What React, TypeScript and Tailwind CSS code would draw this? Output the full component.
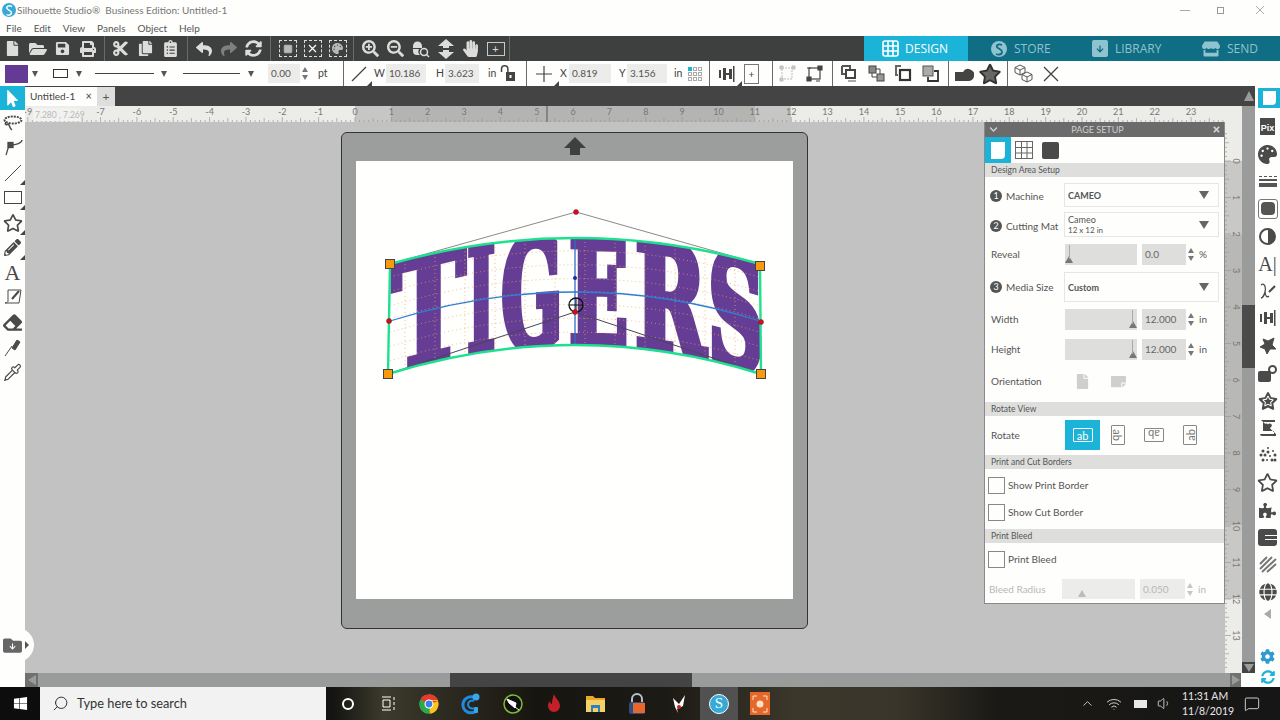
import { ReactNode } from "react";
import {
  FaFile, FaFolderOpen, FaSave, FaPrint, FaCut, FaCopy, FaClipboardList, FaReply, FaShare, FaSyncAlt,
  FaSearchPlus, FaSearchMinus, FaHandPaper, FaPalette, FaStar, FaRegStar, FaPuzzlePiece, FaGlobe, FaCog,
  FaPencilAlt, FaEraser, FaWindows, FaChevronDown, FaTimes, FaMousePointer, FaFolder, FaArrowDown, FaStore,
} from "react-icons/fa";
import { Pipette, Square, Wifi, Volume1, MessageSquare, ChevronUp, Search } from "lucide-react";

const PX = 36.35;

function Cell({ children }: { children: ReactNode }) {
  return <div className="w-[25px] h-full flex items-center justify-center text-[#dcdcda] shrink-0">{children}</div>;
}

function Group({ className, children }: { className: string; children: ReactNode }) {
  return <div className={`relative flex h-full items-center shrink-0 border-r border-[#6a6a6a] ${className}`}>{children}</div>;
}

function DashedBox({ children }: { children: ReactNode }) {
  return (
    <div className="w-[18px] h-[17px] border border-dashed border-[#dddddd] flex items-center justify-center text-[#b8b8b8]">
      {children}
    </div>
  );
}

function TopBar() {
  return (
    <div className="h-[25px] bg-[#3e403f] flex items-center shrink-0">
      <Group className="w-[105px]">
        <Cell><FaFile size={15} /></Cell>
        <Cell><FaFolderOpen size={18} /></Cell>
        <Cell><FaSave size={15} /></Cell>
        <Cell><FaPrint size={16} /></Cell>
      </Group>
      <Group className="w-[83px] pl-[3px]">
        <Cell><FaCut size={17} /></Cell>
        <Cell><FaCopy size={15} /></Cell>
        <Cell><FaClipboardList size={17} /></Cell>
      </Group>
      <Group className="w-[83px] pl-[3px]">
        <Cell><FaReply size={16} /></Cell>
        <Cell><FaShare size={16} className="text-[#7f7f7f]" /></Cell>
        <Cell><FaSyncAlt size={17} /></Cell>
      </Group>
      <Group className="w-[83px] pl-[4px]">
        <Cell><DashedBox><Square size={10} fill="currentColor" /></DashedBox></Cell>
        <Cell>
          <DashedBox>
            <svg width="9" height="9" viewBox="0 0 9 9" stroke="white" strokeWidth="1.200"><path d="M1 1l7 7M8 1 1 8" /></svg>
          </DashedBox>
        </Cell>
        <Cell><DashedBox><FaPalette size={11} /></DashedBox></Cell>
      </Group>
      <Group className="w-[156px] pl-[4px]">
        <Cell><FaSearchPlus size={17} /></Cell>
        <Cell><FaSearchMinus size={17} /></Cell>
        <Cell>
          <svg width="18" height="18" viewBox="0 0 18 18" fill="currentColor">
            <path d="M1 6a4.500 4.500 0 0 1 9 0v2H1zM1 9h6a5 5 0 0 0 1 6H5a4 4 0 0 1-4-4z" />
            <circle cx="12" cy="12" r="3.500" fill="none" stroke="currentColor" strokeWidth="1.500" />
            <path d="M14.500 14.500 17 17" stroke="currentColor" strokeWidth="1.500" />
          </svg>
        </Cell>
        <Cell>
          <svg width="20" height="20" viewBox="0 0 20 20" fill="currentColor">
            <path d="M10 0 18 7H13V9H7V7H2zM7 11H13V13H18L10 20 2 13H7z" />
          </svg>
        </Cell>
        <Cell><FaHandPaper size={17} /></Cell>
        <Cell>
          <div className="w-[18px] h-[14px] border border-[#c8c8c8] flex items-center justify-center text-[11px] leading-none">+</div>
        </Cell>
      </Group>
      <div className="flex-1" />
      <div className="w-[416px] h-full flex items-center bg-[#0f6d84] text-[#8fc3cf] text-[12px] font-['Open_Sans',sans-serif]">
        <div className="w-[104px] h-full bg-[#1bb3d7] flex items-center pl-[18px] gap-[6px] text-white">
          <svg width="17" height="17" viewBox="0 0 17 17" fill="none" stroke="white" strokeWidth="1.600">
            <rect x="1" y="1" width="15" height="15" rx="2" />
            <path d="M6 1v15M11 1v15M1 6h15M1 11h15" />
          </svg>
          <span>DESIGN</span>
        </div>
        <div className="w-[104px] flex items-center pl-[23px] gap-[7px]">
          <svg width="16" height="16" viewBox="0 0 16 16">
            <circle cx="8" cy="8" r="8" fill="#8fc3cf" />
            <path d="M11 4C8 2.500 5 4 6 6s5 2 5 5-4 3-6 2" fill="none" stroke="#0f6d84" strokeWidth="1.800" />
          </svg>
          <span>STORE</span>
        </div>
        <div className="w-[104px] flex items-center pl-[20px] gap-[7px]">
          <div className="w-[16px] h-[17px] bg-[#8fc3cf] rounded-[2px] flex items-center justify-center text-[#0f6d84]"><FaArrowDown size={8} /></div>
          <span>LIBRARY</span>
        </div>
        <div className="w-[104px] flex items-center pl-[26px] gap-[7px]">
          <FaStore size={18} />
          <span>SEND</span>
        </div>
      </div>
    </div>
  );
}

function Caret({ className = "" }: { className?: string }) {
  return <span className={`w-0 h-0 border-x-[3.5px] border-x-transparent border-t-[6px] border-t-[#555] shrink-0 ${className}`} />;
}

function Spin({ className = "" }: { className?: string }) {
  return (
    <div className={`flex flex-col gap-[3px] w-[8px] items-center shrink-0 ${className}`}>
      <span className="w-0 h-0 border-x-[3px] border-x-transparent border-b-[5px] border-b-[#777]" />
      <span className="w-0 h-0 border-x-[3px] border-x-transparent border-t-[5px] border-t-[#777]" />
    </div>
  );
}

function Field({ value, className }: { value: string; className: string }) {
  return <div className={`h-[19px] bg-[#ececea] text-[10px] text-[#555] flex items-center pl-[3px] shrink-0 ${className}`}>{value}</div>;
}

function Notch({ className }: { className: string }) {
  return <span className={`absolute bottom-0 w-0 h-0 border-l-[5px] border-l-transparent border-b-[5px] border-b-[#444] ${className}`} />;
}

function OptionBar() {
  return (
    <div className="h-[25px] bg-[#fefefc] flex items-center shrink-0 text-[#444] text-[10.500px] overflow-hidden">
      <Group className="w-[344px] pl-[5px]">
        <div className="w-[23px] h-[18px] bg-[#653a95]" />
        <Caret className="ml-[4px]" />
        <div className="w-[15px] h-[9px] border border-[#333] ml-[15px]" />
        <Caret className="ml-[8px]" />
        <div className="w-[59px] h-px bg-[#444] ml-[13px]" />
        <Caret className="ml-[7px]" />
        <div className="w-[57px] h-px bg-[#444] ml-[16px]" />
        <Caret className="ml-[8px]" />
        <Field value="0.00" className="w-[32px] ml-[14px]" />
        <Spin className="ml-[1px]" />
        <span className="ml-[9px]">pt</span>
      </Group>
      <Group className="w-[183px]">
        <svg width="16" height="16" viewBox="0 0 16 16" className="ml-[7px] shrink-0" stroke="#444" strokeWidth="1.200">
          <path d="M1 15 15 1" />
        </svg>
        <Notch className="left-[23px]" />
        <span className="ml-[7px] w-[12px]">W</span>
        <Field value="10.186" className="w-[40px]" />
        <span className="ml-[10px] w-[8px]">H</span>
        <Field value="3.623" className="w-[34px] ml-[1px]" />
        <span className="ml-[9px]">in</span>
        <svg width="16" height="17" viewBox="0 0 16 17" className="ml-[4px] shrink-0">
          <path d="M1.500 7V4a3.200 3.200 0 0 1 6.400 0v3" fill="none" stroke="#444" strokeWidth="1.500" />
          <rect x="6" y="7" width="9" height="9" fill="#444" />
          <rect x="9.500" y="10" width="2" height="3" fill="#fff" />
        </svg>
      </Group>
      <Group className="w-[183px]">
        <svg width="18" height="18" viewBox="0 0 18 18" className="ml-[8px] shrink-0" stroke="#444" strokeWidth="1.200">
          <path d="M9 1v16M1 9h16" />
        </svg>
        <Notch className="left-[27px]" />
        <span className="ml-[7px] w-[7px]">X</span>
        <Field value="0.819" className="w-[42px] ml-[2px]" />
        <span className="ml-[8px] w-[7px]">Y</span>
        <Field value="3.156" className="w-[40px] ml-[1px]" />
        <span className="ml-[7px]">in</span>
        <div className="grid grid-cols-3 gap-[1px] ml-[6px]">
          {Array.from({ length: 9 }, (_, i) => (
            <span key={i} className={i === 0 ? "w-[4px] h-[4px] bg-[#1bb3d7]" : "w-[4px] h-[4px] border border-[#aaa]"} />
          ))}
        </div>
      </Group>
      <Group className="w-[63px]">
        <svg width="18" height="16" viewBox="0 0 18 16" className="ml-[8px] shrink-0" fill="#444">
          <path d="M1 4h2v8H1zM5 2h3v12H5zM8 7h3v2H8zM11 3h3v10h-3zM15 0h1.500v16H15z" />
        </svg>
        <Notch className="left-[27px]" />
        <div className="w-[15px] h-[20px] border border-[#777] ml-[8px] flex items-center justify-center text-[10px] leading-none">+</div>
      </Group>
      <Group className="w-[60px]">
        <svg width="17" height="17" viewBox="0 0 17 17" className="ml-[6px] shrink-0" fill="none" stroke="#bbb">
          <rect x="3" y="3" width="10" height="11" strokeDasharray="2 1" />
          <path d="M1 1h3v3H1zM13 1h3v3h-3zM1 13h3v3H1z" fill="#ccc" />
        </svg>
        <svg width="18" height="18" viewBox="0 0 18 18" className="ml-[10px] shrink-0" fill="none" stroke="#444" strokeWidth="1.200">
          <rect x="3" y="3" width="11" height="11" />
          <path d="M1 12h4v4H1zM12 1h4v4h-4zM1 3h4M10 16h4" fill="#444" />
        </svg>
      </Group>
      <Group className="w-[116px]">
        <svg width="16" height="17" viewBox="0 0 16 17" className="ml-[8px] shrink-0" fill="none" stroke="#555" strokeWidth="2">
          <path d="M1 1h8v3M1 1v8h3" />
          <rect x="5" y="5" width="9" height="8" stroke="#444" />
          <path d="M7 16h8" strokeWidth="1" />
        </svg>
        <svg width="17" height="17" viewBox="0 0 17 17" className="ml-[11px] shrink-0">
          <rect x="1" y="1" width="7" height="7" fill="#888" stroke="#444" />
          <rect x="9" y="9" width="7" height="7" fill="#999" stroke="#444" />
          <path d="M8 4h4v5M4 8v4h5" fill="none" stroke="#444" />
        </svg>
        <svg width="17" height="17" viewBox="0 0 17 17" className="ml-[10px] shrink-0" fill="none">
          <path d="M6 1H1v9h2" stroke="#666" strokeWidth="2" />
          <rect x="5" y="5" width="10" height="10" stroke="#333" strokeWidth="2.200" />
        </svg>
        <svg width="17" height="17" viewBox="0 0 17 17" className="ml-[10px] shrink-0">
          <rect x="1" y="1" width="10" height="10" fill="#aaa" stroke="#555" />
          <path d="M12 6h4v10H6v-4" fill="none" stroke="#333" strokeWidth="1.800" />
        </svg>
      </Group>
      <Group className="w-[59px]">
        <svg width="20" height="18" viewBox="0 0 20 18" className="ml-[5px] shrink-0" fill="#444">
          <path d="M1 7h8a6 6 0 1 1 5 9H1z" />
        </svg>
        <div className="relative ml-[6px] text-[#666]">
          <FaStar size={20} />
          <FaRegStar size={20} className="absolute inset-0 text-[#333] scale-[1.15]" />
        </div>
      </Group>
      <svg width="21" height="20" viewBox="0 0 21 20" className="ml-[5px] shrink-0" fill="none" stroke="#444" strokeWidth="0.900">
        <path d="M7 1l5 2.500v5L7 11 2 8.500v-5zM2 3.500 7 6l5-2.500M7 6v5" />
        <path d="M14 8l5 2.500v5L14 18l-5-2.500v-5zM9 10.500 14 13l5-2.500M14 13v5" fill="#fefefc" />
      </svg>
      <svg width="16" height="16" viewBox="0 0 16 16" className="ml-[9px] shrink-0" stroke="#444" strokeWidth="1.300">
        <path d="M1 1l14 14M15 1 1 15" />
      </svg>
    </div>
  );
}

function Tool({ children, corner }: { children: ReactNode; corner?: boolean }) {
  return (
    <div className="relative w-[25px] h-[25px] flex items-center justify-center text-[#4a4a4a] shrink-0">
      {children}
      {corner && <span className="absolute right-0 bottom-0 w-0 h-0 border-l-[5px] border-l-transparent border-b-[5px] border-b-[#444]" />}
    </div>
  );
}

function LeftTools() {
  return (
    <div className="relative z-10 w-[25px] bg-[#fefefc] flex flex-col shrink-0">
      <div className="h-[24px] bg-[#1bb3d7] flex items-center justify-center text-white">
        <FaMousePointer size={17} />
      </div>
      <Tool>
        <svg width="20" height="16" viewBox="0 0 20 16" fill="none" stroke="currentColor">
          <ellipse cx="10" cy="5" rx="8.500" ry="3.500" strokeWidth="2" strokeDasharray="2 1" />
          <path d="M3 7c-2 3 1 3 2 2s1 4 4 6" strokeWidth="1.500" />
        </svg>
      </Tool>
      <Tool>
        <svg width="20" height="20" viewBox="0 0 20 20" fill="none" stroke="currentColor" strokeWidth="1.300">
          <path d="M19 2c0 3-6 5-11 5-3 0-3 5-5 10" />
          <rect x="5" y="4.500" width="5" height="5" fill="currentColor" />
        </svg>
      </Tool>
      <Tool corner>
        <svg width="18" height="18" viewBox="0 0 18 18" stroke="currentColor"><path d="M1 17 17 1" /></svg>
      </Tool>
      <Tool corner><div className="w-[18px] h-[13px] border border-[#444]" /></Tool>
      <Tool corner><FaRegStar size={20} /></Tool>
      <Tool corner><FaPencilAlt size={17} /></Tool>
      <Tool><span className="font-['Liberation_Serif',serif] text-[22px] leading-none">A</span></Tool>
      <Tool>
        <svg width="18" height="18" viewBox="0 0 18 18" fill="none" stroke="currentColor">
          <path d="M4 1h13l-2 13H1c2 0 3-1 3-2z" />
          <path d="M8 10l7-8" strokeWidth="2" />
        </svg>
      </Tool>
      <Tool><FaEraser size={19} /></Tool>
      <Tool>
        <svg width="18" height="18" viewBox="0 0 18 18" stroke="currentColor" fill="currentColor">
          <path d="M1 17 8 7" strokeWidth="1" />
          <path d="M8 9l5-8 3 2-5 8z" />
        </svg>
      </Tool>
      <Tool><Pipette size={19} strokeWidth={1.5} /></Tool>
      <div className="flex-1" />
      <div className="relative h-[34px] mb-[25px]">
        <div className="absolute left-0 top-0 w-[34px] h-[34px] rounded-r-full bg-[#fefefc] flex items-center pl-[3px] gap-[3px]">
          <div className="relative text-[#666]">
            <FaFolder size={19} />
            <FaArrowDown size={7} className="absolute left-[6px] top-[7px] text-white" />
          </div>
          <span className="w-0 h-0 border-y-[4px] border-y-transparent border-l-[4px] border-l-[#555]" />
        </div>
      </div>
    </div>
  );
}

function HRuler() {
  const ticks: ReactNode[] = [];
  for (let i = -74; i < 192; i++) {
    const x = 330 + (i * PX) / 8;
    const h = i % 8 === 0 ? 5 : i % 4 === 0 ? 4 : 2;
    ticks.push(<line key={i} x1={x} x2={x} y1={16 - h} y2={16} stroke="#999" strokeWidth="0.7" />);
  }
  // -8 sits under the coordinate box, so it is left out
  const nums = Array.from({ length: 33 }, (_, i) => i - 9).filter((n) => n !== -8);
  return (
    <svg width="1217" height="16" className="shrink-0 block">
      <rect width="1217" height="16" fill="#ecece9" />
      <rect x="330" width="436" height="16" fill="#c6c6c4" />
      <rect x="366" width="364" height="16" fill="#b4b4b2" />
      <line x1="522" x2="522" y1="0" y2="16" stroke="#555" />
      {ticks}
      {nums.map((n) => (
        <text key={n} x={330 + n * PX} y="9" textAnchor="middle" fontSize="9" fill="#777" fontFamily="Lato">{n}</text>
      ))}
      <rect x="8" y="2" width="47" height="13" fill="#f2f2f0" />
      <text x="10" y="12" fontSize="8.500" fill="#b8b8b8" fontFamily="Lato">7.280 , 7.269</text>
    </svg>
  );
}

function VRuler() {
  const ticks: ReactNode[] = [];
  for (let i = -6; i < 112; i++) {
    const y = 39 + (i * 36.5) / 8;
    const w = i % 8 === 0 ? 6 : i % 4 === 0 ? 4 : 2;
    ticks.push(<line key={i} x1={0} x2={w} y1={y} y2={y} stroke="#999" strokeWidth="0.7" />);
  }
  const nums = Array.from({ length: 14 }, (_, i) => i);
  return (
    <svg width="17" height="551" className="shrink-0 block">
      <rect width="17" height="551" fill="#ecece9" />
      <rect y="39" width="17" height="438" fill="#c8c8c6" />
      <rect y="113" width="17" height="290" fill="#b8b8b6" />
      {ticks}
      {nums.map((n) => (
        <text key={n} x="0" y="0" transform={`translate(8 ${39 + n * 36.5}) rotate(90)`} textAnchor="middle" fontSize="9" fill="#777" fontFamily="Lato">{n}</text>
      ))}
    </svg>
  );
}

const topY = (x: number) => 238 + (x - 576) ** 2 * 0.00075;
const botY = (x: number) => 345 + (x - 576) ** 2 * 0.00082;

function Letter({ ch, x0, x1, adv }: { ch: string; x0: number; x1: number; adv: number }) {
  const cap = 72.9;
  const a = (x1 - x0) / adv;
  const b = (botY(x1) - botY(x0)) / adv;
  const d = (botY(x0) - topY(x0) + 3) / cap;
  return (
    <text
      transform={`matrix(${a} ${b} 0 ${d} ${x0} ${botY(x0) + 1})`}
      fontSize="100"
      fontWeight="700"
      fontFamily="DejaVu Serif"
      fill="#653d94"
      stroke="#653d94"
      strokeWidth="5.500"
    >
      {ch}
    </text>
  );
}

function Artwork() {
  const rows = [0.12, 0.25, 0.38, 0.5, 0.62, 0.75, 0.88];
  const cols = [405, 435, 465, 495, 525, 555, 585, 615, 645, 675, 705, 735];
  return (
    <svg viewBox="341 132 466 496" width="466" height="496" className="absolute left-[-1px] top-[-1px] pointer-events-none">
      <clipPath id="env">
        <path d="M390 264 Q576 212 760 264 L761 374 Q576 316 388 374Z" />
      </clipPath>
      <g clipPath="url(#env)">
        <Letter ch="T" x0={392} x1={463} adv={72} />
        <Letter ch="I" x0={467} x1={495} adv={46} />
        <Letter ch="G" x0={501} x1={561} adv={83} />
        <Letter ch="E" x0={569} x1={625} adv={72} />
        <Letter ch="R" x0={635} x1={705} adv={82} />
        <Letter ch="S" x0={708} x1={761} adv={68} />
      </g>
      {rows.map((t) => {
        const y0 = 264 + t * 110;
        const yc = 212 + t * 104;
        return <path key={t} d={`M390 ${y0} Q576 ${yc} 760 ${y0}`} stroke="#e8a868" strokeWidth="1" strokeDasharray="1 3" fill="none" opacity="0.75" />;
      })}
      {cols.map((x) => (
        <line key={x} x1={x} x2={x} y1={topY(x)} y2={botY(x)} stroke="#e8a868" strokeWidth="1" strokeDasharray="1 3" opacity="0.75" />
      ))}
      <path d="M390 264 576 212 760 264" stroke="#8a8a8a" fill="none" />
      <path d="M388 374 575 312 761 374" stroke="#4a4458" fill="none" />
      <path d="M390 321 Q576 263 760 321" stroke="#2e7fd6" strokeWidth="1.300" fill="none" />
      <path d="M575 240V345" stroke="#2e6fc4" strokeWidth="1.300" />
      <path d="M390 264 Q576 212 760 264 L761 374 Q576 316 388 374Z" stroke="#1fe08f" strokeWidth="2.400" fill="none" />
      <circle cx="575" cy="278" r="2" fill="#1a2a9a" />
      <circle cx="576" cy="305" r="7" stroke="#111" strokeWidth="1.300" fill="none" />
      <path d="M569 305h14M576 298v14" stroke="#111" />
      {[[576, 212], [575, 312], [389, 321], [761, 322]].map(([x, y]) => (
        <circle key={x} cx={x} cy={y} r="2.500" fill="#d0101c" stroke="#8a1010" strokeWidth="0.500" />
      ))}
      {[[390, 264], [760, 266], [388, 374], [761, 374]].map(([x, y]) => (
        <rect key={x} x={x - 4.500} y={y - 4.500} width="9" height="9" fill="#f79a10" stroke="#444" />
      ))}
    </svg>
  );
}

function Section({ title, className = "" }: { title: string; className?: string }) {
  return <div className={`h-[14px] bg-[#dededc] text-[8.500px] leading-[14px] pl-[6px] text-[#555] ${className}`}>{title}</div>;
}

function Num({ n }: { n: number }) {
  return <span className="w-[12px] h-[12px] rounded-full bg-[#555] text-white text-[9px] leading-[12px] text-center shrink-0">{n}</span>;
}

function Select({ h, children }: { h: string; children: ReactNode }) {
  return (
    <div className={`w-[155px] border border-[#e6e6e4] flex items-center justify-between pl-[3px] pr-[9px] ${h}`}>
      <div>{children}</div>
      <span className="w-0 h-0 border-x-[5px] border-x-transparent border-t-[8px] border-t-[#666]" />
    </div>
  );
}

function SliderRow({ label, value, unit, thumb, className = "" }: { label: string; value: string; unit: string; thumb: "l" | "r"; className?: string }) {
  return (
    <div className={`flex items-center pl-[6px] ${className}`}>
      <span className="w-[74px]">{label}</span>
      <div className="relative w-[72px] h-[21px] bg-[#dededc]">
        <span className={`absolute bottom-[2px] ${thumb === "l" ? "left-0" : "right-0"} w-0 h-0 border-x-[4px] border-x-transparent border-b-[7px] border-b-[#777]`} />
        <span className={`absolute bottom-[6px] top-[1px] w-px bg-[#aaa] ${thumb === "l" ? "left-[4px]" : "right-[4px]"}`} />
      </div>
      <div className="w-[44px] h-[21px] bg-[#dededc] ml-[5px] text-[10px] flex items-center pl-[3px] text-[#666]">{value}</div>
      <Spin className="ml-[1px]" />
      <span className="ml-[4px]">{unit}</span>
    </div>
  );
}

function RotateBtn({ label, rot, active }: { label: string; rot: string; active?: boolean }) {
  return (
    <div className={`h-[30px] flex items-center justify-center ${active ? "w-[35px] bg-[#1bb3d7]" : "w-[36px]"}`}>
      <div className={`${rot} flex items-center justify-center w-[20px] h-[14px] border rounded-[1px] text-[11px] leading-none ${active ? "border-white text-white" : "border-[#888] text-[#777]"}`}>
        {label}
      </div>
    </div>
  );
}

function Check({ label, className = "" }: { label: string; className?: string }) {
  return (
    <div className={`flex items-center pl-[3px] gap-[3px] ${className}`}>
      <span className="w-[17px] h-[17px] border border-[#888]" />
      <span>{label}</span>
    </div>
  );
}

function PageSetup() {
  return (
    <div className="absolute left-[959px] top-0 w-[241px] h-[482px] bg-[#fefefc] border-x border-b border-[#8a8a8a] text-[10px] text-[#555] flex flex-col font-['Lato',sans-serif]">
      <div className="h-[15px] bg-[#6b6b6b] text-[#cfcfcf] text-[9px] flex items-center justify-between px-[3px] shrink-0 relative">
        <FaChevronDown size={9} className="ml-[1px]" />
        <span className="absolute left-0 right-[14px] text-center">PAGE SETUP</span>
        <FaTimes size={9} />
      </div>
      <div className="h-[26px] flex items-center shrink-0">
        <div className="w-[26px] h-[26px] bg-[#1bb3d7] flex items-center justify-center">
          <div className="w-[14px] h-[17px] bg-white rounded-br-[4px]" />
        </div>
        <svg width="18" height="18" viewBox="0 0 18 18" fill="none" stroke="#666" className="ml-[4px]">
          <rect x="0.500" y="0.500" width="17" height="17" />
          <path d="M6.500 0.500v17M12 0.500v17M0.500 6.500h17M0.500 12h17" />
        </svg>
        <div className="w-[17px] h-[17px] bg-[#4a4a4a] rounded-[2px] ml-[9px]" />
      </div>
      <Section title="Design Area Setup" />
      <div className="flex items-center pl-[5px] mt-[6px] h-[24px]">
        <div className="flex items-center mt-[2px]">
          <Num n={1} /><span className="ml-[4px] w-[58px]">Machine</span>
        </div>
        <Select h="h-[24px]"><span className="font-bold text-[9px]">CAMEO</span></Select>
      </div>
      <div className="flex items-center pl-[5px] mt-[5px] h-[25px]">
        <div className="flex items-center mt-[3px]">
          <Num n={2} /><span className="ml-[4px] w-[58px] whitespace-nowrap">Cutting Mat</span>
        </div>
        <Select h="h-[25px]">
          <div className="text-[9px] leading-[10px]">Cameo<br /><span className="text-[8px]">12 x 12 in</span></div>
        </Select>
      </div>
      <SliderRow label="Reveal" value="0.0" unit="%" thumb="l" className="mt-[7px]" />
      <div className="flex items-center pl-[5px] mt-[7px] h-[30px]">
        <Num n={3} /><span className="ml-[4px] w-[58px] whitespace-nowrap">Media Size</span>
        <Select h="h-[30px]"><span className="font-bold text-[9px]">Custom</span></Select>
      </div>
      <SliderRow label="Width" value="12.000" unit="in" thumb="r" className="mt-[7px]" />
      <SliderRow label="Height" value="12.000" unit="in" thumb="r" className="mt-[9px]" />
      <div className="flex items-center pl-[6px] h-[42px]">
        <span className="w-[84px]">Orientation</span>
        <FaFile size={15} className="text-[#cfcfcd]" />
        <FaFile size={15} className="text-[#cfcfcd] ml-[21px] rotate-90" />
      </div>
      <Section title="Rotate View" />
      <div className="flex items-center pl-[6px] mt-[4px]">
        <span className="w-[74px]">Rotate</span>
        <RotateBtn label="ab" rot="" active />
        <RotateBtn label="ab" rot="rotate-90" />
        <RotateBtn label="ab" rot="rotate-180" />
        <RotateBtn label="ab" rot="-rotate-90" />
      </div>
      <Section title="Print and Cut Borders" className="mt-[5px]" />
      <Check label="Show Print Border" className="mt-[8px]" />
      <Check label="Show Cut Border" className="mt-[10px]" />
      <Section title="Print Bleed" className="mt-[8px]" />
      <Check label="Print Bleed" className="mt-[8px]" />
      <div className="flex items-center pl-[4px] mt-[11px] text-[#b8b8b8]">
        <span className="w-[73px]">Bleed Radius</span>
        <div className="relative w-[73px] h-[20px] bg-[#ececea]">
          <span className="absolute left-[16px] bottom-[2px] w-0 h-0 border-x-[4px] border-x-transparent border-b-[7px] border-b-[#bbb]" />
        </div>
        <div className="w-[45px] h-[20px] bg-[#ececea] ml-[5px] flex items-center pl-[3px]">0.050</div>
        <Spin className="ml-[1px] opacity-40" />
        <span className="ml-[4px]">in</span>
      </div>
    </div>
  );
}

function RightBtn({ children }: { children: ReactNode }) {
  return <div className="h-[27.4px] flex items-center justify-center text-[#4a4a4a] shrink-0">{children}</div>;
}

function RightIcons() {
  return (
    <div className="w-[25px] bg-[#fefefc] flex flex-col shrink-0 pt-[2px]">
      <div className="h-[20px] mx-[3px] mr-0 mb-[5px] bg-[#1bb3d7] flex items-center justify-center">
        <div className="w-[13px] h-[14px] bg-white rounded-br-[4px]" />
      </div>
      <RightBtn>
        <div className="w-[15px] h-[17px] bg-[#4a4a4a] text-white text-[9px] font-bold leading-[20px] text-center font-['Liberation_Sans',sans-serif]">Pix</div>
      </RightBtn>
      <RightBtn><FaPalette size={19} /></RightBtn>
      <RightBtn>
        <div className="flex flex-col gap-[2px] w-[18px]">
          <span className="h-px border-t border-dashed border-[#555]" />
          <span className="h-[2px] bg-[#555]" />
          <span className="h-[4px] bg-[#555]" />
        </div>
      </RightBtn>
      <RightBtn>
        <div className="w-[20px] h-[20px] border border-[#777] rounded-[3px] flex items-center justify-center">
          <div className="w-[14px] h-[13px] bg-[#555] rounded-[4px]" />
        </div>
      </RightBtn>
      <RightBtn>
        <div className="w-[17px] h-[17px] rounded-full border-2 border-[#4a4a4a] bg-[linear-gradient(90deg,#fff_50%,#4a4a4a_50%)]" />
      </RightBtn>
      <RightBtn><span className="font-['Liberation_Serif',serif] text-[20px] leading-none">A|</span></RightBtn>
      <RightBtn>
        <svg width="18" height="18" viewBox="0 0 18 18" fill="none" stroke="currentColor" strokeWidth="1.300">
          <path d="M2 3c4-3 5 3 4 7s-3 6-4 6M6 9c0 5 2 7 4 5" />
          <path d="M10 10l6-6" strokeWidth="2.200" />
        </svg>
      </RightBtn>
      <RightBtn>
        <svg width="18" height="16" viewBox="0 0 18 16" fill="currentColor">
          <path d="M1 4h2v8H1zM5 2h3v12H5zM8 7h3v2H8zM11 3h3v10h-3zM15 0h1.500v16H15z" />
        </svg>
      </RightBtn>
      <RightBtn>
        <svg width="18" height="18" viewBox="0 0 18 18" fill="currentColor" stroke="currentColor">
          <path d="M9 4 15 1 13 8 17 12 11 12 8 17 6 12 1 10 6 7 4 2z" />
        </svg>
      </RightBtn>
      <RightBtn>
        <div className="relative w-[19px] h-[17px]">
          <div className="absolute left-0 bottom-0 w-[13px] h-[11px] bg-[#4a4a4a] rounded-[2px]" />
          <div className="absolute right-0 top-0 w-[9px] h-[9px] rounded-full border-2 border-[#4a4a4a] bg-white" />
        </div>
      </RightBtn>
      <RightBtn>
        <div className="relative"><FaStar size={20} /><FaRegStar size={12} className="absolute left-[4px] top-[4px] text-white" /></div>
      </RightBtn>
      <RightBtn>
        <svg width="20" height="18" viewBox="0 0 20 18" fill="currentColor">
          <path d="M3 1h14v2H5v9h11v3H2a2 2 0 0 0 2 2h14v-2" />
          <path d="M10 11 6.500 7.500a2 2 0 0 1 3.500-2 2 2 0 0 1 3.500 2z" />
        </svg>
      </RightBtn>
      <RightBtn>
        <svg width="18" height="18" viewBox="0 0 18 18" fill="currentColor">
          {[[9, 2], [4, 5], [9, 6], [14, 5], [2, 9], [6, 9], [11, 10], [16, 9], [4, 14], [8, 14], [13, 14], [16, 14]].map(([x, y], i) => (
            <circle key={i} cx={x} cy={y} r={i % 3 === 0 ? 1 : 1.500} />
          ))}
        </svg>
      </RightBtn>
      <RightBtn><FaRegStar size={21} /></RightBtn>
      <RightBtn><FaPuzzlePiece size={17} /></RightBtn>
      <RightBtn>
        <div className="w-[19px] h-[17px] bg-[#4a4a4a] rounded-[3px] flex flex-col justify-center items-end gap-[3px]">
          <span className="w-[12px] h-px bg-white" />
          <span className="w-[12px] h-px bg-white" />
        </div>
      </RightBtn>
      <RightBtn>
        <svg width="18" height="18" viewBox="0 0 18 18" stroke="#777" strokeWidth="2">
          <path d="M1 8 8 1M1 13 13 1M3 16 17 3M8 16 17 8" />
        </svg>
      </RightBtn>
      <RightBtn><FaGlobe size={18} /></RightBtn>
      <div className="flex justify-center mt-[3px]">
        <span className="w-0 h-0 border-y-[5px] border-y-transparent border-r-[7px] border-r-[#aaa]" />
      </div>
      <div className="flex-1" />
      <div className="flex flex-col items-center gap-[6px] mb-[3px] text-[#2e9ad0]">
        <FaCog size={15} />
        <FaSyncAlt size={14} className="text-[#1bb3d7]" />
      </div>
    </div>
  );
}

function Workspace() {
  return (
    <div className="flex-1 flex flex-col min-w-0">
      <div className="h-[20px] bg-[#434443] flex items-end shrink-0">
        <div className="w-[72px] h-[19px] bg-[#fefefc] flex items-center justify-between pl-[5px] pr-[5px] text-[10px] text-[#444]">
          <span>Untitled-1</span>
          <span className="text-[11px]">×</span>
        </div>
        <div className="w-[18px] h-[19px] bg-[#dededc] flex items-center justify-center text-[12px] text-[#555] leading-none">+</div>
        <div className="flex-1" />
        <div className="w-[12px] h-[20px] flex items-center justify-center">
          <span className="w-0 h-0 border-x-[5px] border-x-transparent border-b-[10px] border-b-[#9a9c9b]" />
        </div>
      </div>
      <div className="flex flex-1 min-h-0">
        <div className="flex-1 flex flex-col min-w-0">
          <HRuler />
          <div className="flex flex-1 min-h-0">
            <div className="relative flex-1 bg-[#c2c2c2]">
              <div className="absolute left-[316px] top-[10px] w-[467px] h-[497px] bg-[#9b9e9d] border border-[#333] rounded-[6px] flex flex-col items-center">
                <div className="h-[28px] pb-[2px] flex items-center justify-center">
                  <svg width="22" height="18" viewBox="0 0 22 18" fill="#3f3f3f"><path d="M11 0 22 11H16V18H6V11H0z" /></svg>
                </div>
                <div className="w-[437px] h-[438px] bg-[#fffffd]" />
                <Artwork />
              </div>
              <PageSetup />
            </div>
            <VRuler />
          </div>
        </div>
        <div className="w-[13px] bg-[#9a9c9b] flex flex-col shrink-0">
          <div className="h-[199px]" />
          <div className="h-[63px] bg-[#4a4b4a]" />
          <div className="flex-1" />
          <div className="h-[11px] bg-[#434443] flex items-center justify-center">
            <span className="w-0 h-0 border-x-[5px] border-x-transparent border-t-[8px] border-t-[#9a9c9b]" />
          </div>
        </div>
      </div>
      <div className="h-[14px] flex shrink-0 bg-[#fefefc]">
        <div className="w-[1216px] flex bg-[#9a9c9b]">
          <div className="w-[13px] bg-[#6f7170] flex items-center justify-center">
            <span className="w-0 h-0 border-y-[5px] border-y-transparent border-r-[8px] border-r-[#9a9c9b]" />
          </div>
          <div className="w-[412px]" />
          <div className="w-[242px] bg-[#434443]" />
          <div className="flex-1" />
          <div className="w-[11px] bg-[#6f7170] flex items-center justify-center">
            <span className="w-0 h-0 border-y-[5px] border-y-transparent border-l-[8px] border-l-[#9a9c9b]" />
          </div>
        </div>
      </div>
    </div>
  );
}

function Taskbar() {
  return (
    <div className="h-[33px] flex items-center shrink-0 text-white bg-[linear-gradient(90deg,#0d0d0d_0%,#141412_26%,#3c3a2c_30%,#17150f_42%,#1c1a14_52%,#3b372b_62%,#39352a_70%,#1a1915_78%,#161616_100%)]">
      <div className="w-[40px] flex justify-center"><FaWindows size={15} /></div>
      <div className="w-[286px] h-full bg-[#f2f2f2] text-[#333] text-[12.800px] flex items-center pl-[12px]">
        <Search size={17} strokeWidth={1.3} className="-scale-x-100 text-[#222]" />
        <span className="ml-[8px] font-['Lato',sans-serif]">Type here to search</span>
      </div>
      <div className="w-[41px] flex justify-center ml-[1px]"><span className="w-[12px] h-[12px] rounded-full border-2 border-white" /></div>
      <div className="w-[40px] flex justify-center">
        <svg width="15" height="15" viewBox="0 0 15 15" stroke="white" fill="none"><path d="M1 1h9M1 14h9M2 4h7v7H2zM13 1v3M13 6v3M13 11v3" /></svg>
      </div>
      <div className="w-[42px] flex justify-center">
        <svg width="20" height="20" viewBox="0 0 20 20">
          <circle cx="10" cy="10" r="9.500" fill="#e33b2e" />
          <path d="M10 10 18.200 15 A9.500 9.500 0 0 1 4 17.500z" fill="#2ea84a" />
          <path d="M10 10 1.500 5.500A9.500 9.500 0 0 0 8 19.500z" fill="#2ea84a" />
          <path d="M10 .5A9.500 9.500 0 0 1 19 7h-9zM19 7a9.500 9.500 0 0 1-8 12.500l-1-9z" fill="#fbc31c" />
          <path d="M10 .5A9.500 9.500 0 0 1 18.700 6H10 A4 4 0 0 0 6.300 8.600L2 3.800A9.500 9.500 0 0 1 10 .5z" fill="#e33b2e" />
          <circle cx="10" cy="10" r="4.500" fill="white" />
          <circle cx="10" cy="10" r="3.400" fill="#3c7fe8" />
        </svg>
      </div>
      <div className="w-[42px] flex justify-center">
        <svg width="20" height="22" viewBox="0 0 20 22" fill="none">
          <path d="M14 5A8 8 0 1 0 15 18" stroke="#1e8ae0" strokeWidth="3" />
          <path d="M13 8A4 4 0 1 0 13 15" stroke="#1e8ae0" strokeWidth="2" />
          <circle cx="15" cy="4" r="3.500" fill="#3aa6ea" />
          <rect x="13" y="14" width="4" height="6" rx="1" fill="#3aa6ea" />
        </svg>
      </div>
      <div className="w-[41px] flex justify-center">
        <svg width="20" height="20" viewBox="0 0 20 20">
          <circle cx="10" cy="10" r="9" fill="#111" stroke="#7ebb32" strokeWidth="1.500" />
          <path d="M4 5 13 9 12 14 6 9zM12 13 16 16" fill="white" stroke="white" />
        </svg>
      </div>
      <div className="w-[42px] flex justify-center">
        <svg width="14" height="20" viewBox="0 0 14 20" fill="#c4202a"><path d="M7 0c1 4 6 7 6 12a6 6 0 0 1-12 0c0-2 1-4 2-5 0 2 1 3 2 3 0-4 1-7 2-10z" /></svg>
      </div>
      <div className="w-[41px] flex justify-center">
        <svg width="19" height="17" viewBox="0 0 19 17"><path d="M0 1h7l2 2h10v3H0z" fill="#e8a92b" /><path d="M0 5h19v12H0z" fill="#f6d265" /><path d="M5 10h9v7h-2v-4H7v4H5z" fill="#2e80c4" /></svg>
      </div>
      <div className="w-[42px] flex justify-center">
        <svg width="18" height="22" viewBox="0 0 18 22">
          <path d="M4 10V6a5 5 0 0 1 10 0v4" fill="none" stroke="#b8c0cc" strokeWidth="2" />
          <rect x="1" y="9" width="16" height="12" rx="2" fill="#2a4f86" />
          <rect x="5" y="10" width="12" height="10" fill="#e8662a" />
        </svg>
      </div>
      <div className="w-[42px] flex justify-center">
        <svg width="14" height="20" viewBox="0 0 14 20"><path d="M1 4 7 10 13 1 11 12 5 15 6 19 3 13z" fill="white" /><circle cx="7" cy="13" r="2" fill="#c4202a" /></svg>
      </div>
      <div className="w-[38px] h-full bg-[#515151] flex items-center justify-center">
        <div className="w-[20px] h-[20px] rounded-full bg-[#36a9d6] border border-white text-white text-[15px] leading-[17px] text-center font-['Liberation_Serif',serif]">S</div>
      </div>
      <div className="w-[44px] flex justify-center">
        <div className="w-[20px] h-[23px] bg-[#e5682a] flex items-center justify-center">
          <svg width="16" height="18" viewBox="0 0 16 18" fill="none" stroke="#fde3c5">
            <path d="M1 5V1h4M11 1h4v4M1 13v4h4M11 17h4v-4" />
            <circle cx="8" cy="9" r="3.500" fill="#fde3c5" stroke="none" />
          </svg>
        </div>
      </div>
      <div className="flex-1" />
      <div className="flex items-center text-[#e8e8e8]">
        <ChevronUp size={15} strokeWidth={1.300} />
        <Wifi size={16} strokeWidth={1.300} className="ml-[11px]" />
        <div className="w-[13px] h-[8px] bg-[#e8e8e8] ml-[12px]" />
        <Volume1 size={15} strokeWidth={1.300} className="ml-[10px]" />
        <div className="w-[46px] ml-[10px] text-[10.500px] leading-[15px] text-center whitespace-nowrap font-['Lato',sans-serif]">
          <div>11:31 AM</div>
          <div>11/8/2019</div>
        </div>
        <MessageSquare size={16} strokeWidth={1.300} className="ml-[16px] mr-[20px]" />
      </div>
    </div>
  );
}

export default function App() {
  return (
    <div className="w-[1280px] h-[720px] overflow-hidden flex flex-col bg-[#fefefc] font-['Lato',sans-serif]">
      <div className="h-[20px] flex items-center shrink-0 text-[10px] text-[#777]">
        <svg width="14" height="14" viewBox="0 0 14 14" className="ml-[2px] shrink-0">
          <circle cx="7" cy="7" r="7" fill="#36a9d6" />
          <path d="M10 3.500C7 2 4 3.500 5 5.500s5 2 4.500 4.500-3.500 2.500-5 1.500" fill="none" stroke="white" strokeWidth="1.500" />
        </svg>
        <span className="ml-[1px] whitespace-pre">Silhouette Studio®  Business Edition: Untitled-1</span>
        <div className="flex-1" />
        <span className="w-[10px] h-px bg-[#aaa]" />
        <span className="w-[7px] h-[7px] border border-[#999] ml-[27px]" />
        <svg width="10" height="10" viewBox="0 0 10 10" stroke="#aaa" className="ml-[31px] mr-[15px]"><path d="M1 1l8 8M9 1 1 9" /></svg>
      </div>
      <div className="h-[16px] flex items-center gap-[12px] pl-[6px] shrink-0 text-[10px] text-[#555]">
        <span>File</span><span>Edit</span><span>View</span><span>Panels</span><span>Object</span><span>Help</span>
      </div>
      <TopBar />
      <OptionBar />
      <div className="flex flex-1 min-h-0">
        <LeftTools />
        <Workspace />
        <RightIcons />
      </div>
      <Taskbar />
    </div>
  );
}
